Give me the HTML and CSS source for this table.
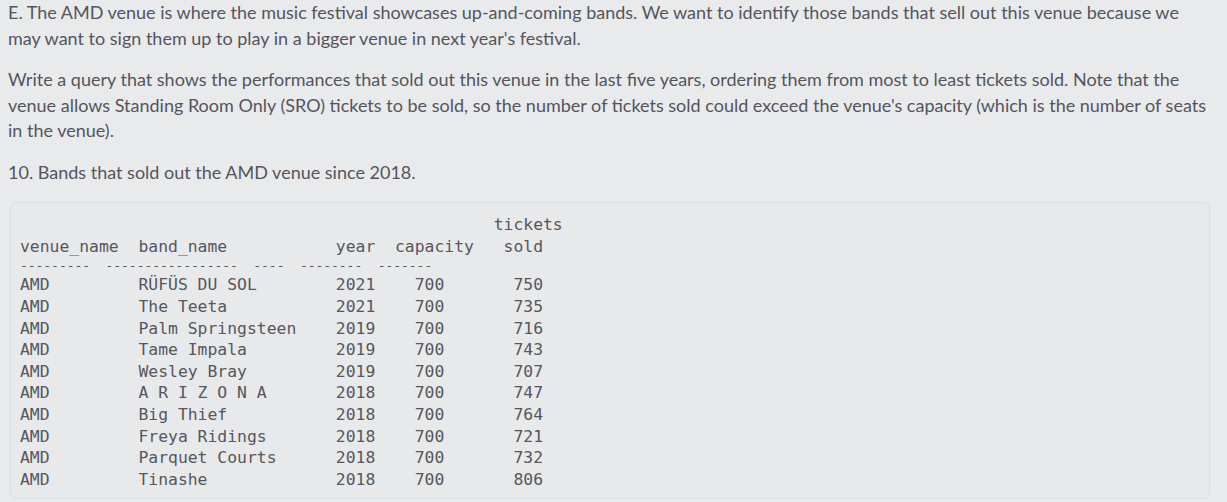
FILE: index.html
```
<!DOCTYPE html>
<html lang="en">
<head>
    <meta charset="UTF-8">
    <title>AMD venue sell-outs</title>
    <link rel="stylesheet" href="styles.css">
</head>
<body>
    <div class="content">
        <p>E. The AMD venue is where the music festival showcases up-and-coming bands. We want to identify those bands that sell out this venue because we may want to sign them up to play in a bigger venue in next year's festival.</p>

        <p>Write a query that shows the performances that sold out this venue in the last five years, ordering them from most to least tickets sold. Note that the venue allows Standing Room Only (SRO) tickets to be sold, so the number of tickets sold could exceed the venue's capacity (which is the number of seats in the venue).</p>

        <p>10. Bands that sold out the AMD venue since 2018.</p>

        <!-- query result -->
        <div class="result">
<pre class="rows">                                                tickets
venue_name  band_name           year  capacity   sold</pre>
<pre class="rule">---------  -----------------  ----  --------  -------</pre>
<pre class="rows">AMD         RÜFÜS DU SOL        2021    700       750
AMD         The Teeta           2021    700       735
AMD         Palm Springsteen    2019    700       716
AMD         Tame Impala         2019    700       743
AMD         Wesley Bray         2019    700       707
AMD         A R I Z O N A       2018    700       747
AMD         Big Thief           2018    700       764
AMD         Freya Ridings       2018    700       721
AMD         Parquet Courts      2018    700       732
AMD         Tinashe             2018    700       806</pre>
        </div>
    </div>
</body>
</html>
```
FILE: styles.css
```
/* General Styles */
body {
    font-family: 'Lato', 'Open Sans', sans-serif;
    margin: 0;
    padding: 0 14px 0 8px;
    background-color: #e9eaec;
    color: #54555c;
}

.content p {
    font-size: 18px;
    line-height: 25.7px;
    margin: 0 0 15.5px 0;
}

.content p:nth-of-type(3) {
    margin-bottom: 17px;
}

/* Result block */
.result {
    margin: 0 3px 0 2px;
    padding: 11px 9px 8px 9px;
    border: 1px solid #dcdde1;
    border-radius: 6px;
    background-color: #e8e9eb;
}

.result pre {
    margin: 0;
    font-family: 'DejaVu Sans Mono', monospace;
    color: #56575d;
}

.rows {
    font-size: 16.4px;
    line-height: 21.6px;
}

.rule {
    font-size: 13px;
    line-height: 17px;
    letter-spacing: -0.05px;
}
```
